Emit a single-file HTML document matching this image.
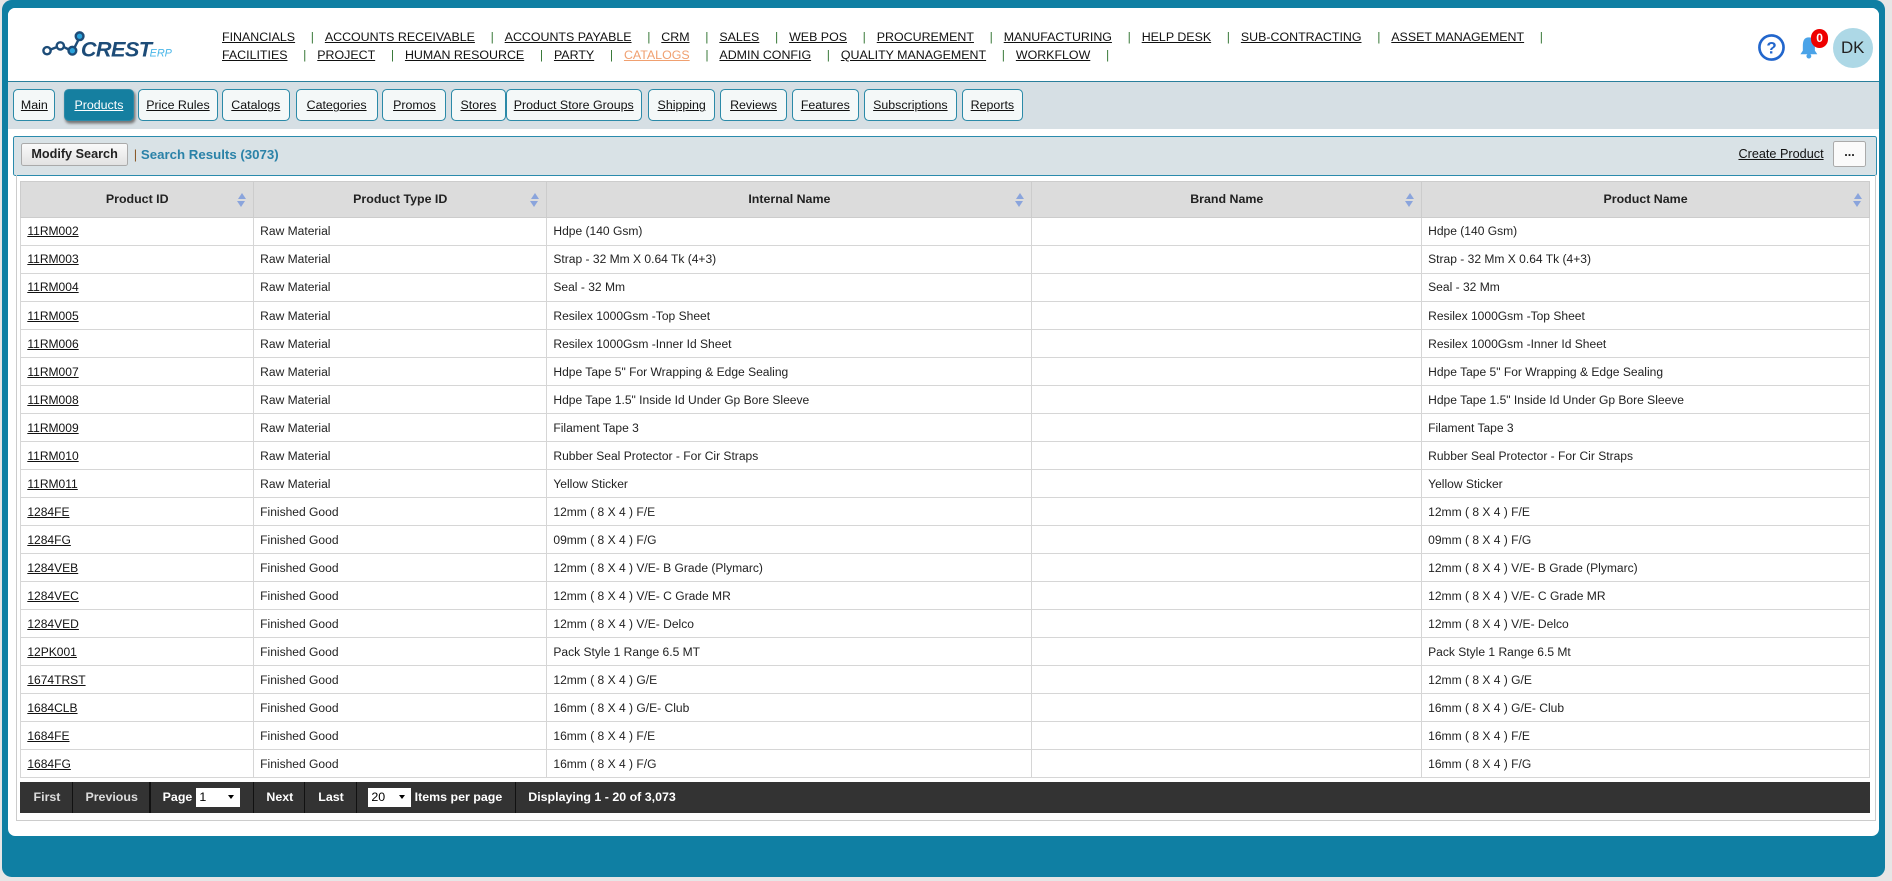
<!DOCTYPE html>
<html><head><meta charset="utf-8">
<style>
html{zoom:1.2066}
body{margin:0;width:1568px;height:730px;background:#e6e6e6;font-family:"Liberation Sans",Arial,sans-serif;font-size:11px;color:#222;position:relative;overflow:hidden}
a{color:#111;text-decoration:underline}
.frame{position:absolute;left:2px;top:0;width:1560px;height:727px;background:#0f7fa3;border-radius:8px}
.card{position:absolute;left:7px;top:7px;width:1550px;height:686px;background:#fff;border-radius:6px;overflow:hidden}
.hdr{position:absolute;left:0;top:0;width:1550px;height:60px;background:#fff;border-bottom:1px solid #2a7f9c}
.nav{position:absolute;left:177px;top:16px;line-height:15px;font-size:10.3px}
.nav span{color:#3a7a3a;margin:0 9px 0 13px}
.tabs{position:absolute;left:0;top:61px;width:1550px;height:39px;background:#d6dfe4}
.tab{position:absolute;top:6px;height:26px;line-height:25px;border:1px solid #2b8aa8;border-radius:4px;background:#f4f8f8;text-align:center;font-size:10.3px;box-sizing:border-box}
.tab.act{background:#157fa0;box-shadow:1px 2px 2px #777}
.tab.act a{color:#fff}
.sp{position:absolute;left:4px;top:106px;width:1543px;height:31px;border:1px solid #2a8bad;background:#d9e2e6;border-radius:2px}
.btn{position:absolute;border:1px solid #aaa;border-radius:2px;background:linear-gradient(#fafafa,#e2e2e2);font-size:10.5px;text-align:center;box-sizing:border-box}
.tw{position:absolute;left:6px;top:138px;width:1540px;height:535px;border:1px solid #ccc;border-top:none}
table{position:absolute;left:3px;top:5px;border-collapse:collapse;width:1533px;table-layout:fixed}
th{background:#dcdcdc;height:29px;padding:0;font-weight:bold;font-size:10.3px;border:1px solid #ccc;position:relative;text-align:center}
th i{position:absolute;right:6px;top:9px;width:0;height:0;border-left:4px solid transparent;border-right:4px solid transparent;border-bottom:5px solid #8aa4dc}
th i:after{content:"";position:absolute;left:-4px;top:7px;border-left:4px solid transparent;border-right:4px solid transparent;border-top:5px solid #8aa4dc}
td{height:22.4px;padding:0 0 0 5px;border:1px solid #d6d6d6;font-size:10px;white-space:nowrap;overflow:hidden}
.pg{position:absolute;left:3px;top:503px;width:1533px;height:26px;background:#333;color:#fff;font-weight:bold;font-size:10.3px}
.pg div{position:absolute;top:0;height:26px;line-height:26px}
.pg .s{width:1px;background:#111}
.sel{display:inline-block;background:#fff;color:#000;height:16px;line-height:16px;vertical-align:middle;font-weight:normal;position:relative;padding-left:3px;box-sizing:border-box}
.sel:after{content:"";position:absolute;right:5px;top:6px;border-left:3px solid transparent;border-right:3px solid transparent;border-top:4px solid #000}
</style></head><body>
<div class="frame"></div>
<div class="card">
 <div class="hdr">
  <svg style="position:absolute;left:27px;top:17px" width="120" height="28" viewBox="0 0 120 28">
   <g fill="none" stroke="#1d4c78" stroke-width="2"><circle cx="5" cy="18" r="3"/><circle cx="16" cy="14" r="3"/><circle cx="26" cy="18" r="3.2" fill="#2aa3dc" stroke="#1d4c78"/><circle cx="32" cy="6" r="3.2" fill="#2aa3dc"/><path d="M8 17l5-2M19 15l4 2M28 15l3-6"/></g>
   <text x="33" y="23" font-family="Liberation Sans" font-weight="bold" font-style="italic" font-size="18" fill="#1d4c78" letter-spacing="-0.5">CREST</text>
   <text x="90" y="23" font-family="Liberation Sans" font-style="italic" font-size="9" fill="#4ab6e8">ERP</text>
  </svg>
  <div class="nav">
   <div><a>FINANCIALS</a><span>|</span><a>ACCOUNTS RECEIVABLE</a><span>|</span><a>ACCOUNTS PAYABLE</a><span>|</span><a>CRM</a><span>|</span><a>SALES</a><span>|</span><a>WEB POS</a><span>|</span><a>PROCUREMENT</a><span>|</span><a>MANUFACTURING</a><span>|</span><a>HELP DESK</a><span>|</span><a>SUB-CONTRACTING</a><span>|</span><a>ASSET MANAGEMENT</a><span>|</span></div>
   <div><a>FACILITIES</a><span>|</span><a>PROJECT</a><span>|</span><a>HUMAN RESOURCE</a><span>|</span><a>PARTY</a><span>|</span><a style="color:#f0a070">CATALOGS</a><span>|</span><a>ADMIN CONFIG</a><span>|</span><a>QUALITY MANAGEMENT</a><span>|</span><a>WORKFLOW</a><span>|</span></div>
  </div>
  <svg style="position:absolute;left:1449px;top:20px" width="24" height="24"><circle cx="12" cy="12" r="10" fill="#fff" stroke="#2266cc" stroke-width="2.2"/><text x="12" y="17" text-anchor="middle" font-family="Liberation Sans" font-weight="bold" font-size="14" fill="#2266cc">?</text></svg>
  <svg style="position:absolute;left:1483px;top:22px" width="18" height="20"><path d="M9 2c-4 0-5 3-5 7v4l-2 3h14l-2-3V9c0-4-1-7-5-7z" fill="#4aa3e8"/><circle cx="9" cy="17.5" r="2" fill="#4aa3e8"/></svg>
  <div style="position:absolute;left:1494px;top:17px;width:14px;height:16px;border-radius:8px;background:#e00;color:#fff;font-size:10px;font-weight:bold;text-align:center;line-height:16px">0</div>
  <div style="position:absolute;left:1512px;top:16px;width:33px;height:33px;border-radius:50%;background:#add8e6;text-align:center;line-height:33px;font-size:14px;color:#222">DK</div>
 </div>
 <div class="tabs">
  <div class="tab" style="left:4px;width:35px"><a>Main</a></div>
  <div class="tab act" style="left:46px;width:58px"><a>Products</a></div>
  <div class="tab" style="left:107px;width:67px"><a>Price Rules</a></div>
  <div class="tab" style="left:177px;width:56px"><a>Catalogs</a></div>
  <div class="tab" style="left:238px;width:68px"><a>Categories</a></div>
  <div class="tab" style="left:310px;width:53px"><a>Promos</a></div>
  <div class="tab" style="left:367px;width:45px"><a>Stores</a></div>
  <div class="tab" style="left:412px;width:113px"><a>Product Store Groups</a></div>
  <div class="tab" style="left:530px;width:56px"><a>Shipping</a></div>
  <div class="tab" style="left:590px;width:55px"><a>Reviews</a></div>
  <div class="tab" style="left:649px;width:56px"><a>Features</a></div>
  <div class="tab" style="left:709px;width:77px"><a>Subscriptions</a></div>
  <div class="tab" style="left:790px;width:51px"><a>Reports</a></div>
 </div>
 <div class="sp">
  <div class="btn" style="left:6px;top:5px;width:88px;height:19px;line-height:17px;font-weight:bold">Modify Search</div>
  <div style="position:absolute;left:99px;top:8px;font-size:11px;font-weight:bold;color:#2a82a8"><span style="color:#8a5a2a;font-weight:normal">|</span> Search Results (3073)</div>
  <a style="position:absolute;left:1429px;top:8px;font-size:10.5px">Create Product</a>
  <div class="btn" style="left:1507px;top:3px;width:28px;height:22px;line-height:18px;background:#fafafa;font-weight:bold">...</div>
 </div>
 <div class="tw">
  <table>
   <colgroup><col style="width:193px"><col style="width:243px"><col style="width:402px"><col style="width:323px"><col></colgroup>
   <tr><th>Product ID<i></i></th><th>Product Type ID<i></i></th><th>Internal Name<i></i></th><th>Brand Name<i></i></th><th>Product Name<i></i></th></tr>
   <tr><td><a>11RM002</a></td><td>Raw Material</td><td>Hdpe (140 Gsm)</td><td></td><td>Hdpe (140 Gsm)</td></tr>
   <tr><td><a>11RM003</a></td><td>Raw Material</td><td>Strap - 32 Mm X 0.64 Tk (4+3)</td><td></td><td>Strap - 32 Mm X 0.64 Tk (4+3)</td></tr>
   <tr><td><a>11RM004</a></td><td>Raw Material</td><td>Seal - 32 Mm</td><td></td><td>Seal - 32 Mm</td></tr>
   <tr><td><a>11RM005</a></td><td>Raw Material</td><td>Resilex 1000Gsm -Top Sheet</td><td></td><td>Resilex 1000Gsm -Top Sheet</td></tr>
   <tr><td><a>11RM006</a></td><td>Raw Material</td><td>Resilex 1000Gsm -Inner Id Sheet</td><td></td><td>Resilex 1000Gsm -Inner Id Sheet</td></tr>
   <tr><td><a>11RM007</a></td><td>Raw Material</td><td>Hdpe Tape 5" For Wrapping &amp; Edge Sealing</td><td></td><td>Hdpe Tape 5" For Wrapping &amp; Edge Sealing</td></tr>
   <tr><td><a>11RM008</a></td><td>Raw Material</td><td>Hdpe Tape 1.5" Inside Id Under Gp Bore Sleeve</td><td></td><td>Hdpe Tape 1.5" Inside Id Under Gp Bore Sleeve</td></tr>
   <tr><td><a>11RM009</a></td><td>Raw Material</td><td>Filament Tape 3</td><td></td><td>Filament Tape 3</td></tr>
   <tr><td><a>11RM010</a></td><td>Raw Material</td><td>Rubber Seal Protector - For Cir Straps</td><td></td><td>Rubber Seal Protector - For Cir Straps</td></tr>
   <tr><td><a>11RM011</a></td><td>Raw Material</td><td>Yellow Sticker</td><td></td><td>Yellow Sticker</td></tr>
   <tr><td><a>1284FE</a></td><td>Finished Good</td><td>12mm ( 8 X 4 ) F/E</td><td></td><td>12mm ( 8 X 4 ) F/E</td></tr>
   <tr><td><a>1284FG</a></td><td>Finished Good</td><td>09mm ( 8 X 4 ) F/G</td><td></td><td>09mm ( 8 X 4 ) F/G</td></tr>
   <tr><td><a>1284VEB</a></td><td>Finished Good</td><td>12mm ( 8 X 4 ) V/E- B Grade (Plymarc)</td><td></td><td>12mm ( 8 X 4 ) V/E- B Grade (Plymarc)</td></tr>
   <tr><td><a>1284VEC</a></td><td>Finished Good</td><td>12mm ( 8 X 4 ) V/E- C Grade MR</td><td></td><td>12mm ( 8 X 4 ) V/E- C Grade MR</td></tr>
   <tr><td><a>1284VED</a></td><td>Finished Good</td><td>12mm ( 8 X 4 ) V/E- Delco</td><td></td><td>12mm ( 8 X 4 ) V/E- Delco</td></tr>
   <tr><td><a>12PK001</a></td><td>Finished Good</td><td>Pack Style 1 Range 6.5 MT</td><td></td><td>Pack Style 1 Range 6.5 Mt</td></tr>
   <tr><td><a>1674TRST</a></td><td>Finished Good</td><td>12mm ( 8 X 4 ) G/E</td><td></td><td>12mm ( 8 X 4 ) G/E</td></tr>
   <tr><td><a>1684CLB</a></td><td>Finished Good</td><td>16mm ( 8 X 4 ) G/E- Club</td><td></td><td>16mm ( 8 X 4 ) G/E- Club</td></tr>
   <tr><td><a>1684FE</a></td><td>Finished Good</td><td>16mm ( 8 X 4 ) F/E</td><td></td><td>16mm ( 8 X 4 ) F/E</td></tr>
   <tr><td><a>1684FG</a></td><td>Finished Good</td><td>16mm ( 8 X 4 ) F/G</td><td></td><td>16mm ( 8 X 4 ) F/G</td></tr>
  </table>
  <div class="pg">
   <div style="left:11px;color:#ddd">First</div><div class="s" style="left:43px"></div>
   <div style="left:54px;color:#ddd">Previous</div><div class="s" style="left:107px"></div>
   <div style="left:118px">Page <span class="sel" style="width:37px">1</span></div><div class="s" style="left:193px"></div>
   <div style="left:204px">Next</div><div class="s" style="left:235px"></div>
   <div style="left:247px">Last</div><div class="s" style="left:278px"></div>
   <div style="left:288px"><span class="sel" style="width:36px">20</span> Items per page</div><div class="s" style="left:410px"></div>
   <div style="left:421px">Displaying 1 - 20 of 3,073</div>
  </div>
 </div>
</div>
</body></html>
